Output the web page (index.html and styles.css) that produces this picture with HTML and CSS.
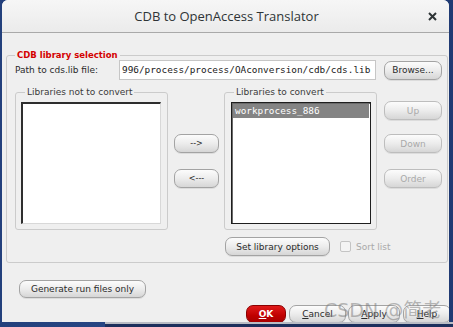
FILE: index.html
```html
<!DOCTYPE html>
<html lang="en">
<head>
  <meta charset="UTF-8">
  <title>CDB to OpenAccess Translator</title>
  <link rel="stylesheet" href="styles.css">
</head>
<body>

  <div class="window">
    <!-- Titelleiste -->
    <div class="titlebar">
      <span class="title">CDB to OpenAccess Translator</span>
      <svg class="close" width="9" height="9" viewBox="0 0 9 9">
        <path d="M1 1 L8 8 M8 1 L1 8" stroke="#2e3436" stroke-width="2"/>
      </svg>
    </div>

    <fieldset class="group main-group">
      <legend class="red-legend">CDB library selection</legend>

      <div class="path-row">
        <span class="path-label">Path to cds.lib file:</span>
        <div class="path-input">996/process/process/OAconversion/cdb/cds.lib</div>
        <button class="btn browse">Browse...</button>
      </div>

      <div class="lib-row">
        <fieldset class="group lib-group">
          <legend>Libraries not to convert</legend>
          <div class="listbox"></div>
        </fieldset>

        <div class="mid-col">
          <button class="btn arrow">--&gt;</button>
          <button class="btn arrow second">&lt;---</button>
        </div>

        <fieldset class="group lib-group right">
          <legend>Libraries to convert</legend>
          <div class="listbox focused">
            <div class="item selected">workprocess_886</div>
          </div>
        </fieldset>

        <div class="side-col">
          <button class="btn side" disabled>Up</button>
          <button class="btn side down" disabled>Down</button>
          <button class="btn side order" disabled>Order</button>
        </div>
      </div>

      <div class="options-row">
        <button class="btn options">Set library options</button>
        <span class="check"></span>
        <span class="check-label">Sort list</span>
      </div>
    </fieldset>

    <button class="btn generate">Generate run files only</button>

    <div class="bottom-row">
      <button class="btn ok"><u>O</u>K</button>
      <button class="btn cancel"><u>C</u>ancel</button>
      <button class="btn apply"><u>A</u>pply</button>
      <button class="btn help"><u>H</u>elp</button>
    </div>

    <div class="watermark">CSDN @简老</div>
  </div>

  <div class="taskbar"></div>

</body>
</html>
```

FILE: styles.css
```css
body {
  margin: 0;
  width: 453px;
  height: 327px;
  overflow: hidden;
  background: linear-gradient(90deg, #23407c, #2c4d8e 60%, #1f3a73);
  font-family: 'DejaVu Sans', sans-serif;
  font-size: 9px;
  color: #2a2a2a;
}

.window {
  position: relative;
  margin-left: 2px;
  width: 447px;
  height: 322px;
  background-color: #efefef;
  border-radius: 6px 6px 0 0;
  overflow: hidden;
}

.titlebar {
  height: 32px;
  border-bottom: 1px solid #a9a9a9;
  background: linear-gradient(#f6f6f6, #ebebeb);
  display: flex;
  align-items: center;
  justify-content: center;
  position: relative;
}

.title {
  font-family: 'Open Sans', sans-serif;
  font-size: 13px;
  color: #2e3436;
  margin-left: 2px;
}

.close {
  position: absolute;
  right: 12px;
  top: 12px;
}

/* Gruppenrahmen */
.group {
  margin: 0;
  border: 1px solid #cbcbcb;
  border-radius: 3px;
  min-width: 0;
}

.group legend {
  padding: 0 2px;
  line-height: 10px;
  font-size: 9px;
  color: #3a3a3a;
}

.main-group {
  margin: 17px 1px 0 4px;
  padding: 0 5px 6px 8px;
}

.red-legend {
  font-weight: bold;
  font-size: 8.5px !important;
  color: #d40000 !important;
}

.path-row {
  display: flex;
  align-items: center;
  height: 20px;
}

.path-label {
  width: 104px;
  flex: none;
}

.path-input {
  width: 253px;
  height: 18px;
  flex: none;
  border: 1px solid #c6c6c6;
  background: #fff;
  font-family: 'DejaVu Sans Mono', monospace;
  font-size: 9.4px;
  line-height: 18px;
  padding-left: 2px;
  box-sizing: content-box;
  white-space: nowrap;
  overflow: hidden;
  color: #1a1a1a;
}

.btn {
  font-family: 'DejaVu Sans', sans-serif;
  font-size: 9px;
  color: #2a2a2a;
  background: linear-gradient(#fcfcfc, #ececec 50%, #d6d6d6);
  border: 1px solid #a3a3a3;
  border-radius: 7px;
  padding: 0;
  height: 19px;
  box-shadow: 0 1px 0 rgba(0, 0, 0, 0.08);
}

.btn:disabled {
  color: #a9a9a9;
  border-color: #bdbdbd;
}

.browse {
  width: 58px;
  margin-left: auto;
}

.lib-row {
  display: flex;
  margin-top: 7px;
}

.lib-group {
  width: 153px;
  height: 143px;
  box-sizing: border-box;
  padding: 0 6px 5px 5px;
  flex: none;
}

.lib-group legend {
  margin-left: 4px;
}

.lib-group.right {
  padding: 0 5px 5px 6px;
  margin-left: 5px;
}

.lib-group.right legend {
  margin-left: 3px;
}

.listbox {
  margin-top: 5px;
  width: 140px;
  height: 122px;
  box-sizing: border-box;
  background: #fff;
  border-top: 2px solid #2e2e2e;
  border-left: 2px solid #2e2e2e;
  border-right: 1px solid #d8d8d8;
  border-bottom: 1px solid #d8d8d8;
}

.listbox.focused {
  border: 1px solid #1e1e1e;
  box-shadow: inset 1px 1px 0 #6a6a6a;
  padding: 1px;
}

.item {
  font-family: 'DejaVu Sans Mono', monospace;
  font-size: 9.4px;
  line-height: 14px;
  padding-left: 2px;
}

.selected {
  background-color: #848484;
  color: #ffffff;
}

.mid-col {
  width: 45px;
  margin-left: 6px;
  display: flex;
  flex-direction: column;
  padding-top: 47px;
}

.arrow {
  width: 45px;
  font-size: 8px;
}

.arrow.second {
  margin-top: 16px;
}

.side-col {
  width: 58px;
  margin-left: 7px;
  display: flex;
  flex-direction: column;
  padding-top: 14px;
}

.side {
  width: 58px;
}

.side.down {
  margin-top: 14px;
}

.side.order {
  margin-top: 16px;
}

.options-row {
  display: flex;
  align-items: center;
  margin-top: 7px;
}

.options {
  width: 105px;
  margin-left: 210px;
}

.check {
  width: 9px;
  height: 9px;
  margin-left: 10px;
  border: 1px solid #c4c4c4;
  border-radius: 2px;
  background: #f4f4f4;
}

.check-label {
  margin-left: 5px;
  color: #a9a9a9;
}

.generate {
  display: block;
  width: 127px;
  height: 18px;
  margin: 17px 0 0 17px;
}

.bottom-row {
  display: flex;
  margin: 7px 0 0 244px;
  gap: 2px;
  width: 210px;
}

.bottom-row .btn {
  height: 18px;
  flex: none;
}

.bottom-row u {
  text-underline-offset: 1px;
}

.ok {
  width: 40px;
  background: linear-gradient(#e01a1a, #c00000 60%, #a80000);
  border-color: #8a0000;
  color: #fff !important;
  font-weight: bold;
}

.cancel {
  width: 57px;
  margin-left: 1px;
}

.apply {
  width: 52px;
}

.help {
  width: 48px;
  margin-left: 1px;
}

.watermark {
  position: absolute;
  left: 322px;
  top: 295px;
  font-family: 'DejaVu Sans', 'Noto Sans CJK SC', sans-serif;
  font-size: 19px;
  color: rgba(120, 120, 120, 0.5);
  white-space: nowrap;
  pointer-events: none;
}

.taskbar {
  height: 5px;
  margin-left: 105px;
  border-top: 2px solid #b9bcc4;
  background: #1c2f5c;
}
```
